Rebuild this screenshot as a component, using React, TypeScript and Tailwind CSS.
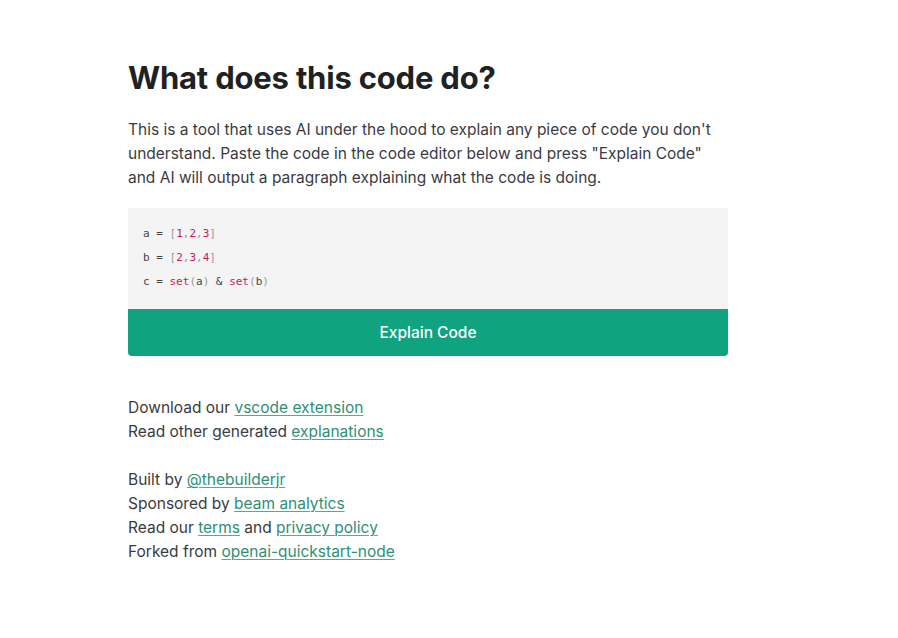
const FooterLink = ({ href, children }: { href: string; children: string }) => (
  <a href={href} className="text-[#2f8f75] underline underline-offset-2 decoration-1 decoration-[#5aa893]">
    {children}
  </a>
);

export default function App() {
  return (
    <div className="min-h-[638px] bg-white font-['Inter',sans-serif] text-[#3a3b42]">
      <main className="ml-[128px] w-[600px] pt-[56px]">
        <h1 className="text-[31px] leading-[44px] font-bold text-[#202123] tracking-[-0.2px]">
          What does this code do?
        </h1>
        <p className="mt-[18px] text-[15.5px] leading-[24px]">
          This is a tool that uses AI under the hood to explain any piece of code you don't
          understand. Paste the code in the code editor below and press "Explain Code"
          and AI will output a paragraph explaining what the code is doing.
        </p>

        <div className="mt-[18px]">
          {/* CODE EDITOR */}
          <div className="bg-[#f4f4f4] px-[15px] pt-[14px] pb-[15px] font-['DejaVu_Sans_Mono',monospace] text-[11px] leading-[24px] text-[#444]">
            <div>
              a = <span className="text-[#999]">[</span>
              <span className="text-[#c41a5c]">1</span>
              <span className="text-[#999]">,</span>
              <span className="text-[#c41a5c]">2</span>
              <span className="text-[#999]">,</span>
              <span className="text-[#c41a5c]">3</span>
              <span className="text-[#999]">]</span>
            </div>
            <div>
              b = <span className="text-[#999]">[</span>
              <span className="text-[#c41a5c]">2</span>
              <span className="text-[#999]">,</span>
              <span className="text-[#c41a5c]">3</span>
              <span className="text-[#999]">,</span>
              <span className="text-[#c41a5c]">4</span>
              <span className="text-[#999]">]</span>
            </div>
            <div>
              c = <span className="text-[#c41a5c]">set</span>
              <span className="text-[#999]">(</span>a<span className="text-[#999]">)</span> &amp;{" "}
              <span className="text-[#c41a5c]">set</span>
              <span className="text-[#999]">(</span>b<span className="text-[#999]">)</span>
            </div>
          </div>
          <button className="block w-full h-[47px] bg-[#10a37f] rounded-b-[4px] text-white text-[15.5px] font-medium">
            Explain Code
          </button>
        </div>

        <div className="mt-[40px] text-[15.5px] leading-[24px]">
          <div>
            Download our <FooterLink href="#">vscode extension</FooterLink>
          </div>
          <div>
            Read other generated <FooterLink href="#">explanations</FooterLink>
          </div>
          <div className="mt-[24px]">
            Built by <FooterLink href="#">@thebuilderjr</FooterLink>
          </div>
          <div>
            Sponsored by <FooterLink href="#">beam analytics</FooterLink>
          </div>
          <div>
            Read our <FooterLink href="#">terms</FooterLink> and{" "}
            <FooterLink href="#">privacy policy</FooterLink>
          </div>
          <div>
            Forked from <FooterLink href="#">openai-quickstart-node</FooterLink>
          </div>
        </div>
      </main>
    </div>
  );
}
